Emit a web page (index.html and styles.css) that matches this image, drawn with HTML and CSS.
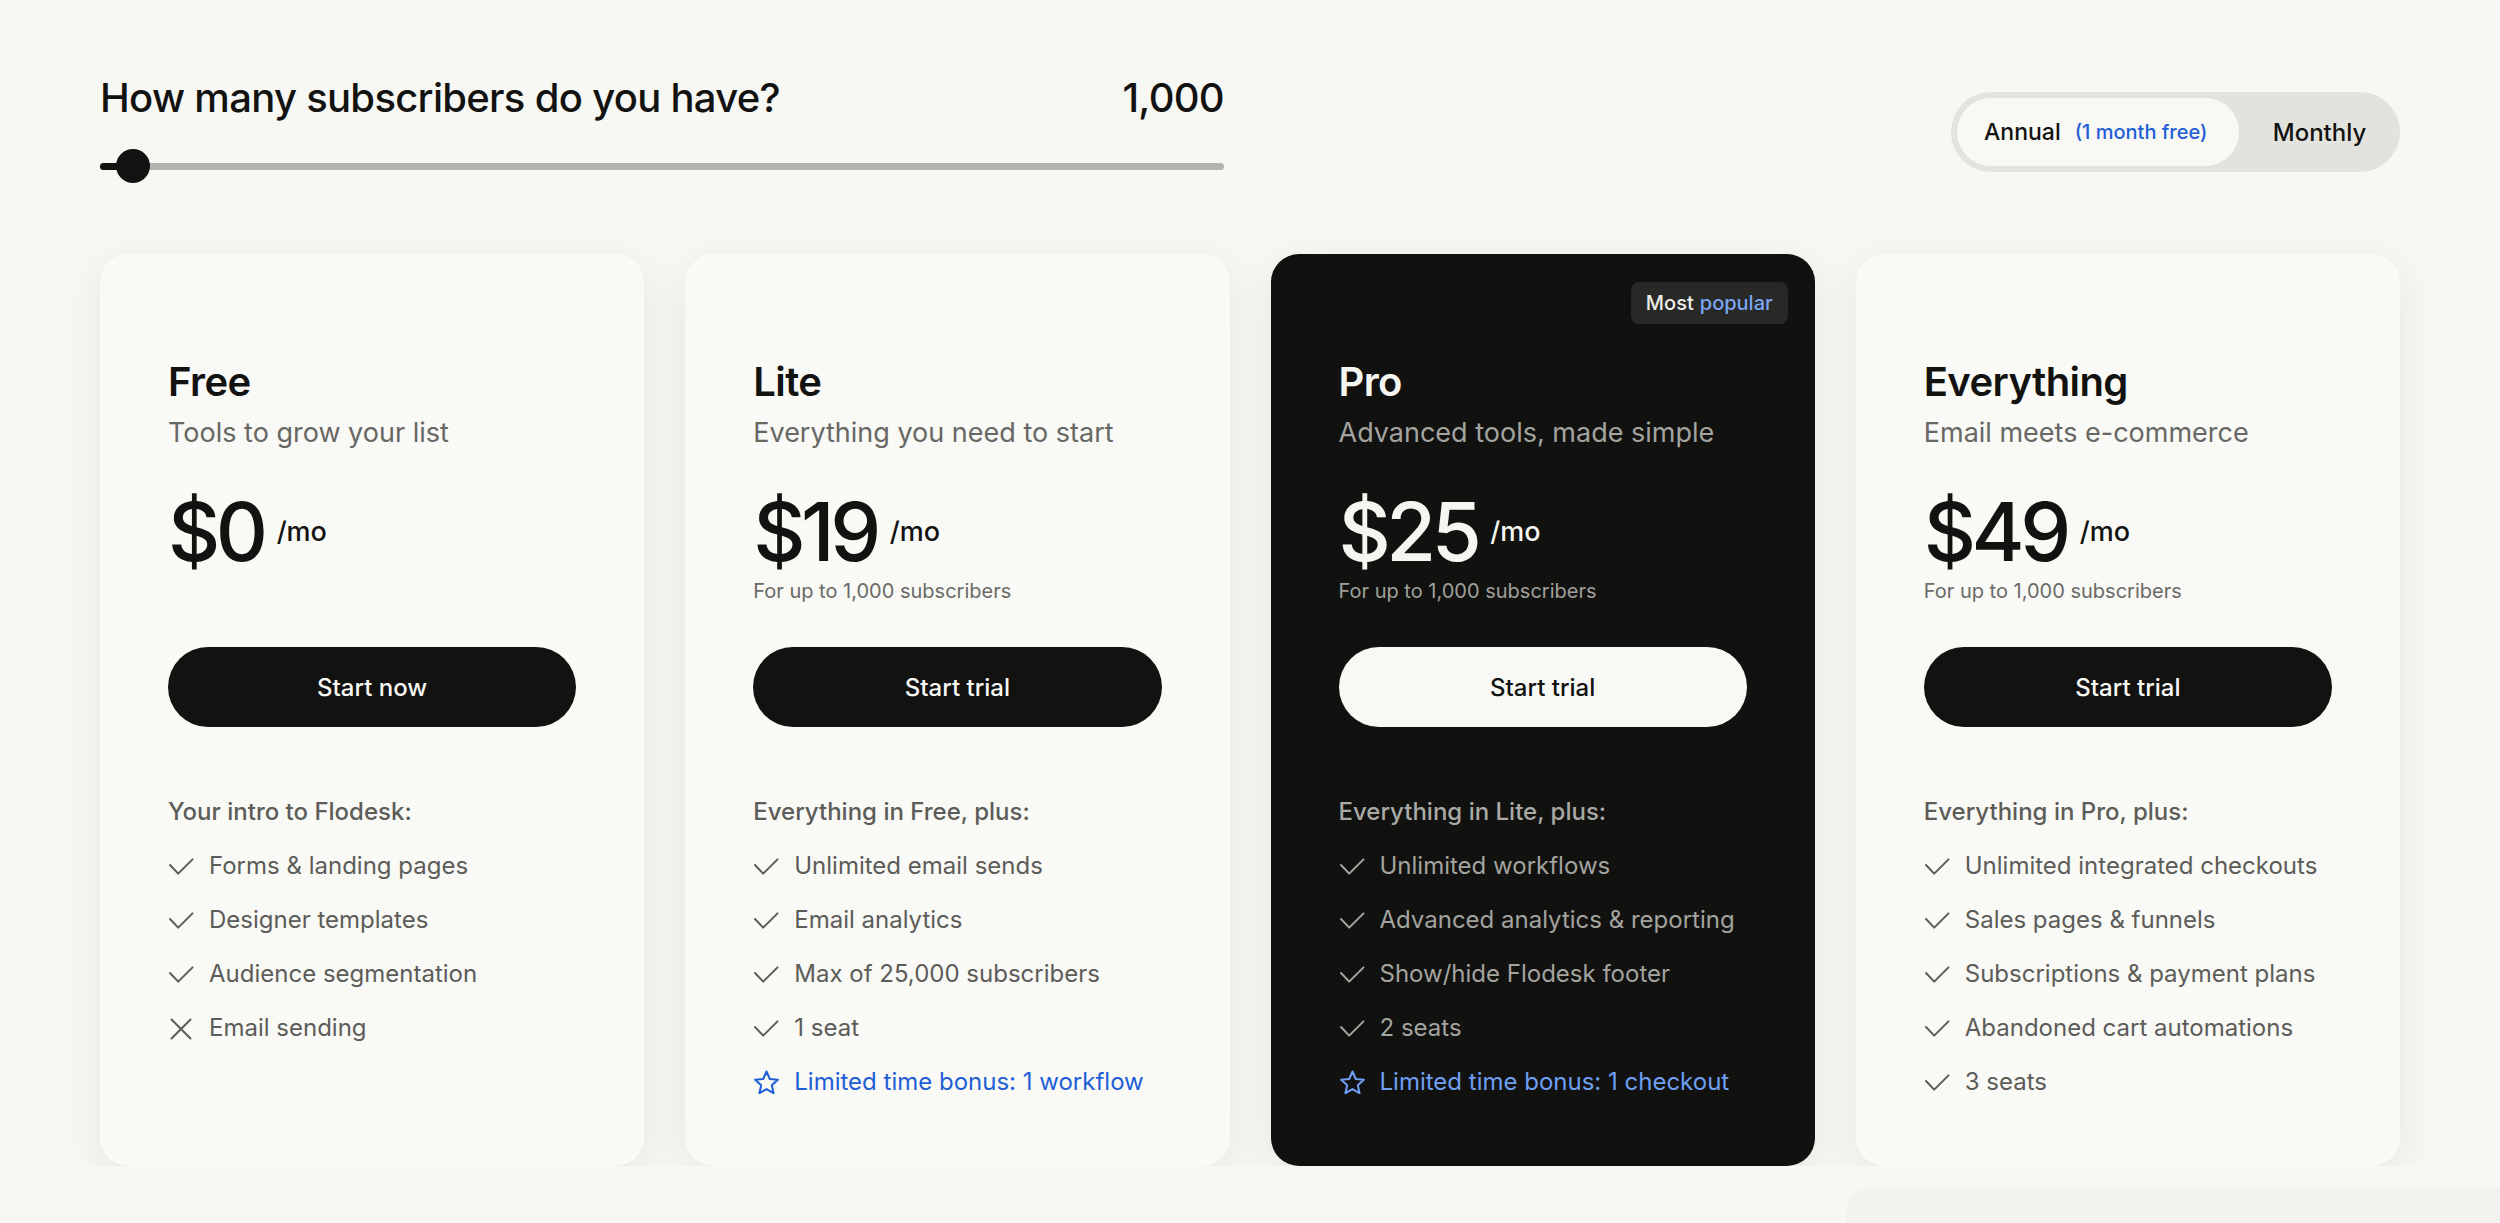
FILE: index.html
```html
<!DOCTYPE html>
<html lang="en">
<head>
<meta charset="utf-8">
<title>Pricing</title>
<link rel="stylesheet" href="styles.css">
</head>
<body>
<main class="page">
  <header class="top">
    <div class="slider-block">
      <div class="slider-head">
        <h2 class="question">How many subscribers do you have?</h2>
        <span class="count">1,000</span>
      </div>
      <div class="slider">
        <div class="track"><div class="fill"></div><div class="thumb"></div></div>
      </div>
    </div>
    <div class="toggle">
      <div class="opt opt-active"><span>Annual</span><span class="free-note">(1 month free)</span></div>
      <div class="opt opt-monthly">Monthly</div>
    </div>
  </header>

  <section class="plans">
    <article class="card">
      <h3 class="plan-name">Free</h3>
      <p class="plan-desc">Tools to grow your list</p>
      <div class="price-block">
        <div class="price-row"><span class="amount">$0</span><span class="per">/mo</span></div>
      </div>
      <button class="cta">Start now</button>
      <p class="feat-head">Your intro to Flodesk:</p>
      <ul class="feats">
        <li><svg class="ico" viewBox="0 0 26 24"><path d="M2 11l8.2 8.6L24.5 5.4"/></svg>Forms &amp; landing pages</li>
        <li><svg class="ico" viewBox="0 0 26 24"><path d="M2 11l8.2 8.6L24.5 5.4"/></svg>Designer templates</li>
        <li><svg class="ico" viewBox="0 0 26 24"><path d="M2 11l8.2 8.6L24.5 5.4"/></svg>Audience segmentation</li>
        <li><svg class="ico" viewBox="0 0 26 24"><path d="M3.5 3.5l19 19M22.5 3.5l-19 19"/></svg>Email sending</li>
      </ul>
    </article>

    <article class="card">
      <h3 class="plan-name">Lite</h3>
      <p class="plan-desc">Everything you need to start</p>
      <div class="price-block">
        <div class="price-row"><span class="amount">$19</span><span class="per">/mo</span></div>
        <p class="limit">For up to 1,000 subscribers</p>
      </div>
      <button class="cta">Start trial</button>
      <p class="feat-head">Everything in Free, plus:</p>
      <ul class="feats">
        <li><svg class="ico" viewBox="0 0 26 24"><path d="M2 11l8.2 8.6L24.5 5.4"/></svg>Unlimited email sends</li>
        <li><svg class="ico" viewBox="0 0 26 24"><path d="M2 11l8.2 8.6L24.5 5.4"/></svg>Email analytics</li>
        <li><svg class="ico" viewBox="0 0 26 24"><path d="M2 11l8.2 8.6L24.5 5.4"/></svg>Max of 25,000 subscribers</li>
        <li><svg class="ico" viewBox="0 0 26 24"><path d="M2 11l8.2 8.6L24.5 5.4"/></svg>1 seat</li>
        <li class="bonus"><svg class="ico" viewBox="0 0 26 24"><path d="M13.5 1.5L16.8 9L24.9 9.8L18.8 15.2L20.6 23.2L13.5 19.1L6.4 23.2L8.2 15.2L2.1 9.8L10.2 9Z"/></svg>Limited time bonus: 1 workflow</li>
      </ul>
    </article>

    <article class="card card-dark">
      <span class="badge">Most <span class="badge-accent">popular</span></span>
      <h3 class="plan-name">Pro</h3>
      <p class="plan-desc">Advanced tools, made simple</p>
      <div class="price-block">
        <div class="price-row"><span class="amount">$25</span><span class="per">/mo</span></div>
        <p class="limit">For up to 1,000 subscribers</p>
      </div>
      <button class="cta">Start trial</button>
      <p class="feat-head">Everything in Lite, plus:</p>
      <ul class="feats">
        <li><svg class="ico" viewBox="0 0 26 24"><path d="M2 11l8.2 8.6L24.5 5.4"/></svg>Unlimited workflows</li>
        <li><svg class="ico" viewBox="0 0 26 24"><path d="M2 11l8.2 8.6L24.5 5.4"/></svg>Advanced analytics &amp; reporting</li>
        <li><svg class="ico" viewBox="0 0 26 24"><path d="M2 11l8.2 8.6L24.5 5.4"/></svg>Show/hide Flodesk footer</li>
        <li><svg class="ico" viewBox="0 0 26 24"><path d="M2 11l8.2 8.6L24.5 5.4"/></svg>2 seats</li>
        <li class="bonus"><svg class="ico" viewBox="0 0 26 24"><path d="M13.5 1.5L16.8 9L24.9 9.8L18.8 15.2L20.6 23.2L13.5 19.1L6.4 23.2L8.2 15.2L2.1 9.8L10.2 9Z"/></svg>Limited time bonus: 1 checkout</li>
      </ul>
    </article>

    <article class="card">
      <h3 class="plan-name">Everything</h3>
      <p class="plan-desc">Email meets e-commerce</p>
      <div class="price-block">
        <div class="price-row"><span class="amount">$49</span><span class="per">/mo</span></div>
        <p class="limit">For up to 1,000 subscribers</p>
      </div>
      <button class="cta">Start trial</button>
      <p class="feat-head">Everything in Pro, plus:</p>
      <ul class="feats">
        <li><svg class="ico" viewBox="0 0 26 24"><path d="M2 11l8.2 8.6L24.5 5.4"/></svg>Unlimited integrated checkouts</li>
        <li><svg class="ico" viewBox="0 0 26 24"><path d="M2 11l8.2 8.6L24.5 5.4"/></svg>Sales pages &amp; funnels</li>
        <li><svg class="ico" viewBox="0 0 26 24"><path d="M2 11l8.2 8.6L24.5 5.4"/></svg>Subscriptions &amp; payment plans</li>
        <li><svg class="ico" viewBox="0 0 26 24"><path d="M2 11l8.2 8.6L24.5 5.4"/></svg>Abandoned cart automations</li>
        <li><svg class="ico" viewBox="0 0 26 24"><path d="M2 11l8.2 8.6L24.5 5.4"/></svg>3 seats</li>
      </ul>
    </article>
  </section>
</main>
<div class="corner-widget"></div>
</body>
</html>
```

FILE: styles.css
```css
* { box-sizing: border-box; }

html, body {
  margin: 0;
  background: #f7f7f3;
  font-family: Inter, "Liberation Sans", sans-serif;
  color: #121211;
  overflow: hidden;
}

.page {
  padding: 74px 100px 0;
}

/* top row */
.top {
  display: flex;
  justify-content: space-between;
  align-items: flex-start;
}

.slider-block {
  width: 1124px;
}

.slider-head {
  display: flex;
  justify-content: space-between;
  align-items: baseline;
}

.question,
.count {
  margin: 0;
  font-size: 40px;
  line-height: 48px;
  font-weight: 500;
  letter-spacing: -0.7px;
}

.slider {
  margin-top: 27px;
  height: 34px;
  display: flex;
  align-items: center;
}

.track {
  position: relative;
  width: 100%;
  height: 7px;
  border-radius: 4px;
  background: #b3b3b1;
}

.fill {
  width: 34px;
  height: 100%;
  border-radius: 4px;
  background: #121211;
}

.thumb {
  position: absolute;
  left: 16px;
  top: 50%;
  width: 34px;
  height: 34px;
  margin-top: -17px;
  border-radius: 50%;
  background: #121211;
}

.toggle {
  margin-top: 18px;
  width: 449px;
  height: 80px;
  padding: 6px;
  display: flex;
  border-radius: 40px;
  background: #e3e3de;
}

.opt {
  height: 68px;
  display: flex;
  align-items: center;
  font-size: 23px;
  font-weight: 500;
}

.opt-active {
  width: 282px;
  padding: 0 24px 0 27px;
  gap: 14px;
  border-radius: 34px;
  background: #f8f8f4;
}

.free-note {
  color: #1f5ed6;
  font-size: 20px;
  font-weight: 500;
}

.opt-monthly {
  flex: 1;
  justify-content: center;
  font-size: 24px;
  padding-left: 6px;
}

/* cards */
.plans {
  margin-top: 71px;
  display: grid;
  grid-template-columns: repeat(4, 1fr);
  gap: 41px;
}

.card {
  position: relative;
  padding: 104px 68px 68px;
  border-radius: 28px;
  background: #f9f9f5;
  box-shadow: 0 10px 44px rgba(0, 0, 0, 0.075);
}

.plan-name {
  margin: 0;
  font-size: 40px;
  line-height: 48px;
  font-weight: 600;
  letter-spacing: -0.6px;
}

.plan-desc {
  margin: 9px 0 0;
  font-size: 27px;
  line-height: 36px;
  font-weight: 400;
  color: #676764;
  letter-spacing: 0;
}

.price-block {
  margin-top: 41px;
  height: 113px;
}

.price-row {
  display: flex;
  align-items: flex-start;
  gap: 13px;
}

.amount {
  font-size: 81px;
  line-height: 80px;
  font-weight: 500;
  letter-spacing: -4.5px;
}

.per {
  margin-top: 26px;
  font-size: 27px;
  line-height: 27px;
  font-weight: 500;
}

.limit {
  margin: 5px 0 0;
  font-size: 20px;
  line-height: 28px;
  color: #6a6a67;
}

.cta {
  display: flex;
  align-items: center;
  justify-content: center;
  width: 100%;
  height: 80px;
  margin-top: 42px;
  border: 0;
  border-radius: 40px;
  background: #121211;
  color: #f8f8f4;
  font-family: inherit;
  font-size: 24px;
  font-weight: 500;
}

.feat-head {
  margin: 69px 0 0;
  font-size: 24px;
  line-height: 32px;
  font-weight: 500;
  color: #5c5c59;
}

.feats {
  list-style: none;
  margin: 22px 0 0;
  padding: 0;
  display: flex;
  flex-direction: column;
  gap: 22px;
}

.feats li {
  display: flex;
  align-items: center;
  gap: 15px;
  font-size: 24px;
  line-height: 32px;
  color: #5c5c59;
}

.ico {
  flex: none;
  width: 26px;
  height: 24px;
  fill: none;
  stroke: #5c5c59;
  stroke-width: 2;
  stroke-linecap: round;
  stroke-linejoin: round;
}

.feats li.bonus {
  color: #1f5ed6;
}

.bonus .ico {
  stroke: #1f5ed6;
}

/* dark card */
.card-dark {
  background: #111110;
  color: #f6f6f1;
}

.card-dark .plan-desc { color: #a3a39f; }
.card-dark .limit { color: #a0a09c; }
.card-dark .cta { background: #f8f8f4; color: #121211; }
.card-dark .feat-head { color: #a9a9a5; }
.card-dark .feats li { color: #a3a39f; }
.card-dark .ico { stroke: #a3a39f; }
.card-dark .feats li.bonus { color: #6f9ff2; }
.card-dark .bonus .ico { stroke: #6f9ff2; }

.badge {
  position: absolute;
  top: 28px;
  right: 27px;
  height: 42px;
  padding: 0 15px;
  display: flex;
  align-items: center;
  gap: 6px;
  border-radius: 8px;
  background: #282826;
  color: #ecece8;
  font-size: 20px;
  font-weight: 500;
}

.badge-accent { color: #7ba6f2; }

.corner-widget {
  position: fixed;
  left: 1846px;
  top: 1188px;
  width: 800px;
  height: 200px;
  border-radius: 24px;
  background: #f2f2ee;
  z-index: -1;
}
```
